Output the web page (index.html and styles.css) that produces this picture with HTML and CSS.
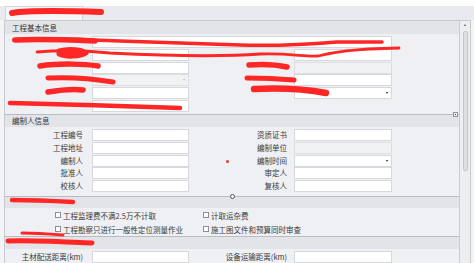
FILE: index.html
```html
<!DOCTYPE html>
<html lang="zh">
<head>
<meta charset="utf-8">
<title>工程信息</title>
<link rel="stylesheet" href="styles.css">
</head>
<body>
<div class="page">
  <div class="topband"></div>
  <div class="tabs"><div class="tab"></div></div>
  <div class="frame">
    <div class="content">
      <section class="sec sec1">
        <div class="sec-head">工程基本信息</div>
        <div class="sec-body form">
          <div class="lbl"></div><div class="inp wide"></div>
          <div class="lbl"></div><div class="inp combo"><i class="caret"></i></div><div class="lbl"></div><div class="inp"></div>
          <div class="lbl"></div><div class="inp"></div><div class="lbl"></div><div class="inp off"></div>
          <div class="lbl"></div><div class="inp combo off"><i class="caret dim"></i></div><div class="lbl"></div><div class="inp"></div>
          <div class="lbl"></div><div class="inp"></div><div class="lbl"></div><div class="inp combo"><i class="caret"></i></div>
          <div class="lbl"></div><div class="inp"></div>
        </div>
        <span class="collapse"></span>
      </section>
      <section class="sec sec2">
        <div class="sec-head">编制人信息</div>
        <div class="sec-body form">
          <div class="lbl">工程编号</div><div class="inp"></div><div class="lbl">资质证书</div><div class="inp"></div>
          <div class="lbl">工程地址</div><div class="inp"></div><div class="lbl">编制单位</div><div class="inp off"></div>
          <div class="lbl">编制人</div><div class="inp"></div><div class="lbl mark">编制时间<span class="dot"></span></div><div class="inp combo"><i class="caret"></i></div>
          <div class="lbl">批准人</div><div class="inp"></div><div class="lbl">审定人</div><div class="inp"></div>
          <div class="lbl">校核人</div><div class="inp"></div><div class="lbl">复核人</div><div class="inp"></div>
        </div>
        <span class="splitter"></span>
      </section>
      <section class="sec sec3">
        <div class="sec-head"></div>
        <div class="sec-body checks">
          <div class="chk"><span class="box"></span>工程监理费不满2.5万不计取</div>
          <div class="chk"><span class="box"></span>计取运杂费</div>
          <div class="chk"><span class="box"></span>工程勘察只进行一般性定位测量作业</div>
          <div class="chk"><span class="box"></span>施工图文件和预算同时审查</div>
        </div>
      </section>
      <section class="sec sec4">
        <div class="sec-head"></div>
        <div class="sec-body form">
          <div class="lbl">主材配送距离(km)</div><div class="inp"></div><div class="lbl">设备运输距离(km)</div><div class="inp"></div>
        </div>
      </section>
    </div>
    <div class="scrollbar">
      <i class="sb-up"></i>
      <div class="thumb"></div>
    </div>
  </div>
</div>
<svg class="redact" width="474" height="263" viewBox="0 0 474 263">
  <g fill="none" stroke="#ff2626" stroke-linecap="round" stroke-linejoin="round">
    <path d="M12 13 C 30 10, 70 11, 101 12" stroke-width="6"/>
    <path d="M14 40 C 40 38, 80 39, 120 41 C 170 43, 210 44, 240 45 C 270 46, 300 45, 337 42 L 382 42" stroke-width="3.5"/>
    <path d="M15 40 C 40 39, 70 40, 95 41" stroke-width="5.5"/>
    <path d="M37 52 C 60 50, 80 50, 110 53 C 170 56, 220 57, 260 54 C 290 53, 305 57, 318 56 C 335 52, 350 49, 399 48" stroke-width="2.8"/>
    <path d="M59 51 C 70 48, 82 50, 86 53 C 80 57, 65 57, 59 54 Z" stroke-width="5" fill="#ff2626"/>
    <path d="M40 66 C 60 63, 85 64, 98 66" stroke-width="5.5"/>
    <path d="M249 65 C 262 64, 278 65, 287 67" stroke-width="5.5"/>
    <path d="M48 78 C 70 77, 95 79, 113 82" stroke-width="5"/>
    <path d="M247 78 C 265 78, 282 79, 294 80" stroke-width="5"/>
    <path d="M48 92 C 60 90, 75 89, 83 90" stroke-width="5.5"/>
    <path d="M254 89 C 275 88, 305 89, 326 93" stroke-width="6.5"/>
    <path d="M10 103 C 60 104, 130 106, 180 108" stroke-width="4.5"/>
    <path d="M12 200 C 30 200, 55 201, 73 202" stroke-width="4.5"/>
    <path d="M22 233 C 35 233, 50 234, 63 235" stroke-width="3"/>
    <path d="M8 241 C 30 240, 65 242, 92 243" stroke-width="5"/>
  </g>
</svg>
</body>
</html>
```

FILE: styles.css
```css
html, body {
  margin: 0;
  padding: 0;
}
body {
  width: 474px;
  height: 263px;
  overflow: hidden;
  background: #f4f4f6;
  font-family: "Noto Sans CJK SC", "Noto Sans", sans-serif;
  font-size: 7.5px;
  color: #333;
  position: relative;
}
.page {
  display: flex;
  flex-direction: column;
  width: 474px;
  height: 263px;
  overflow: hidden;
}
.topband {
  height: 6px;
  flex: none;
  background: #fdfdfd;
}
.tabs {
  height: 14px;
  flex: none;
  background: #e9eaed;
  display: flex;
  padding-left: 5px;
}
.tab {
  width: 78px;
  height: 14px;
  box-sizing: border-box;
  background: #f6f6f8;
  border: 1px solid #d3d5da;
  border-bottom: none;
}
.frame {
  margin-left: 4px;
  width: 467px;
  flex: 1;
  min-height: 0;
  overflow: hidden;
  box-sizing: border-box;
  border: 1px solid #c7cad0;
  border-bottom: none;
  display: flex;
  background: #eceef1;
}
.content {
  width: 455px;
  box-sizing: border-box;
  border-right: 1px solid #c9ccd2;
  display: flex;
  flex-direction: column;
}
.sec {
  position: relative;
  flex: none;
  border-top: 1px solid #b9bcc3;
}
.sec1 { border-top: none; }
.sec-head {
  height: 12px;
  line-height: 12px;
  padding-left: 7px;
  background: #e3e4e8;
  color: #333;
}
.sec1 .sec-head { height: 13px; line-height: 13px; }
.sec3 .sec-head { height: 11px; }
.sec-body {
  background: #eef0f3;
  box-sizing: border-box;
}
.sec1 .sec-body { height: 80px; padding-top: 2px; }
.sec2 .sec-body { height: 69px; padding-top: 2px; }
.sec3 .sec-body { height: 28px; }
.sec4 .sec-body { height: 15px; padding-top: 2px; }

.form {
  display: grid;
  grid-template-columns: 87px 97px 105px 98px;
  grid-auto-rows: 12px;
  row-gap: 0.75px;
  align-content: start;
}
.lbl {
  box-sizing: border-box;
  padding-right: 9px;
  text-align: right;
  line-height: 12px;
  white-space: nowrap;
  color: #3a3a3a;
}
.lbl:nth-child(4n+3) { padding-right: 7px; }
.inp {
  box-sizing: border-box;
  height: 12px;
  background: #ffffff;
  border: 1px solid #d6d8dd;
}
.inp.wide { grid-column: 2 / 5; }
.inp.off { background: #f1f2f4; border-color: #dcdee2; }
.combo {
  display: flex;
  align-items: center;
  justify-content: flex-end;
  padding-right: 3px;
}
.caret {
  display: block;
  width: 0;
  height: 0;
  border-left: 1.5px solid transparent;
  border-right: 1.5px solid transparent;
  border-top: 2px solid #222;
}
.caret.dim { border-top-color: #b8bbc0; }
.mark { position: relative; }
.dot {
  position: absolute;
  left: 37px;
  top: 5px;
  width: 3px;
  height: 3px;
  border-radius: 50%;
  background: #e53935;
}
.collapse {
  position: absolute;
  right: 1px;
  bottom: -3px;
  width: 5px;
  height: 5px;
  box-sizing: border-box;
  border: 1px solid #8e9299;
  background: #f6f6f8;
  z-index: 2;
}
.collapse::after {
  content: "";
  position: absolute;
  left: 1px;
  top: 1px;
  width: 1px;
  height: 1px;
  background: #333;
}
.splitter {
  position: absolute;
  left: 225px;
  bottom: -3px;
  width: 5px;
  height: 5px;
  box-sizing: border-box;
  border: 1px solid #555;
  border-radius: 50%;
  background: #f6f6f8;
  z-index: 2;
}
.checks {
  display: grid;
  grid-template-columns: 148px 200px;
  grid-auto-rows: 14px;
  padding-left: 50px;
}
.chk {
  display: flex;
  align-items: center;
  white-space: nowrap;
  color: #3a3a3a;
}
.box {
  width: 6px;
  height: 6px;
  box-sizing: border-box;
  border: 1px solid #8c9096;
  background: #fff;
  margin-right: 2px;
}
.scrollbar {
  width: 10px;
  display: flex;
  flex-direction: column;
  align-items: center;
  padding-top: 3px;
  background: #eceef1;
}
.sb-up {
  display: block;
  width: 0;
  height: 0;
  border-left: 1.5px solid transparent;
  border-right: 1.5px solid transparent;
  border-bottom: 2px solid #555;
  margin-bottom: 5px;
}
.thumb {
  width: 5px;
  height: 140px;
  box-sizing: border-box;
  border: 1px solid #c4c7cd;
  border-radius: 2px;
  background: #dfe0e4;
}
.redact {
  position: absolute;
  left: 0;
  top: 0;
  pointer-events: none;
}
```
